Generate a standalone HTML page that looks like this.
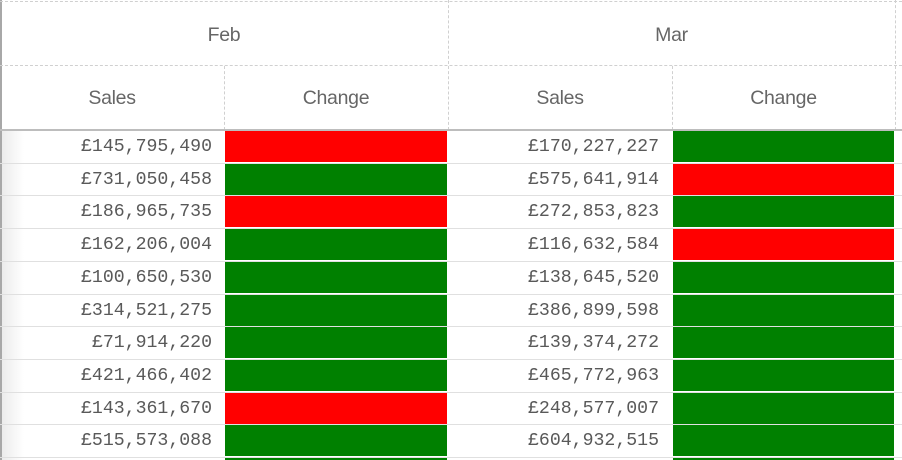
<!DOCTYPE html>
<html><head><meta charset="utf-8"><style>
html,body{margin:0;padding:0;background:#fff;width:902px;height:460px;overflow:hidden;position:relative}
#wrap{position:absolute;left:0;top:0;width:902px;height:460px;overflow:hidden}
.h{position:absolute;font-family:"Liberation Sans",sans-serif;font-size:19.5px;color:#666;text-align:center;letter-spacing:-0.3px;line-height:24px;height:24px}
.n{position:absolute;font-family:"Liberation Mono",monospace;font-size:18.2px;color:#595959;text-align:right;width:200px;line-height:32px;height:32px}
.c{position:absolute;height:31px}
.r{background:#ff0000}.g{background:#008000}
.dl{position:absolute;border-top:1px dashed #d0d0d0;height:0}
.dv{position:absolute;border-left:1px dashed #d0d0d0;width:0}
.rl{position:absolute;left:0;width:902px;height:1px;background:#e0e0e0}
</style></head><body><div id="wrap">
<div style="position:absolute;left:0;top:0;width:2px;height:460px;background:#a8a8a8"></div>
<div class="dl" style="left:0;top:1px;width:902px"></div>
<div class="dl" style="left:0;top:65px;width:902px"></div>
<div class="dv" style="left:448px;top:0;height:130px"></div>
<div class="dv" style="left:224px;top:66px;height:64px"></div>
<div class="dv" style="left:672px;top:66px;height:64px"></div>
<div class="dv" style="left:895px;top:0;height:130px"></div>
<div style="position:absolute;left:0;top:129px;width:902px;height:2px;background:#bdbdbd"></div>
<div class="h" style="left:0;width:448px;top:23px">Feb</div>
<div class="h" style="left:448px;width:447px;top:23px">Mar</div>
<div class="h" style="left:0;width:224px;top:86px">Sales</div>
<div class="h" style="left:224px;width:224px;top:86px">Change</div>
<div class="h" style="left:448px;width:224px;top:86px">Sales</div>
<div class="h" style="left:672px;width:223px;top:86px">Change</div>
<div style="position:absolute;left:2px;top:131px;width:22px;height:329px;background:linear-gradient(to right,#ececec,#fff)"></div>
<div id="rows"></div>
</div>
<script>
var d=[["£145,795,490","r","£170,227,227","g"],["£731,050,458","g","£575,641,914","r"],["£186,965,735","r","£272,853,823","g"],["£162,206,004","g","£116,632,584","r"],["£100,650,530","g","£138,645,520","g"],["£314,521,275","g","£386,899,598","g"],["£71,914,220","g","£139,374,272","g"],["£421,466,402","g","£465,772,963","g"],["£143,361,670","r","£248,577,007","g"],["£515,573,088","g","£604,932,515","g"]];
var h="";
for(var i=0;i<d.length;i++){var t=Math.round(131+i*32.7);
h+='<div class="n" style="left:12px;top:'+t+'px">'+d[i][0]+'</div>';
h+='<div class="c '+d[i][1]+'" style="left:225px;width:222px;top:'+t+'px"></div>';
h+='<div class="n" style="left:459px;top:'+t+'px">'+d[i][2]+'</div>';
h+='<div class="c '+d[i][3]+'" style="left:673px;width:221px;top:'+t+'px"></div>';
if(i>0)h+='<div class="rl" style="top:'+(t-1)+'px"></div>';}
var t2=Math.round(131+10*32.7);
h+='<div class="rl" style="top:'+(t2-1)+'px"></div>';
h+='<div class="c g" style="left:225px;width:222px;top:'+t2+'px;height:'+(460-t2)+'px"></div>';
h+='<div class="c g" style="left:673px;width:221px;top:'+t2+'px;height:'+(460-t2)+'px"></div>';
document.getElementById("rows").innerHTML=h;
</script>
</body></html>
